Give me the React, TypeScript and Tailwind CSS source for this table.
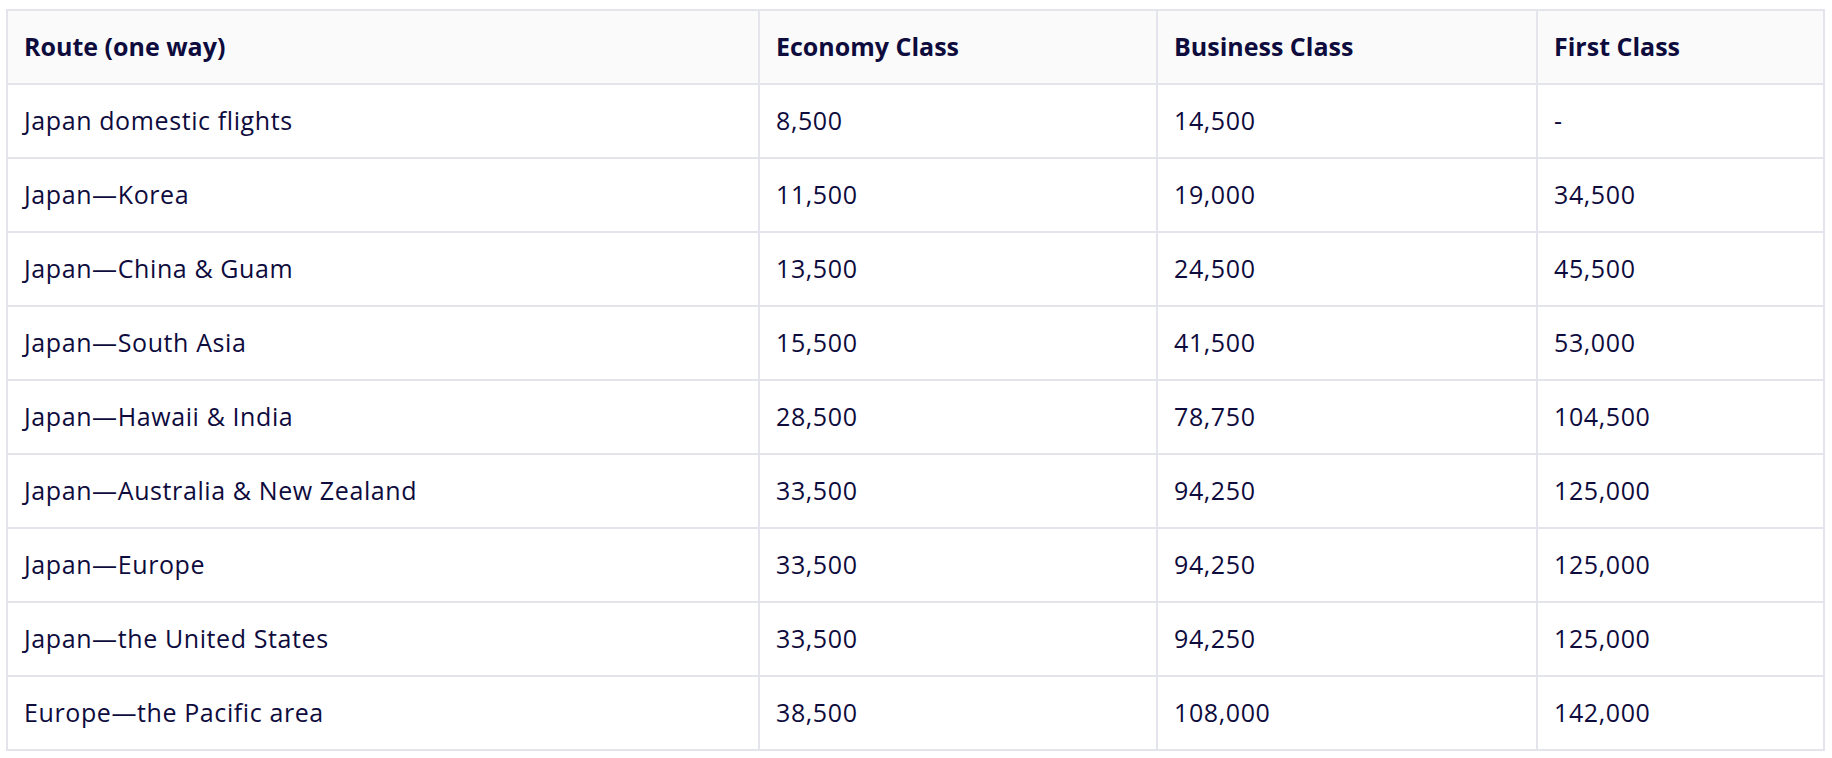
const rows: [string, string, string, string][] = [
  ['Japan domestic flights', '8,500', '14,500', '-'],
  ['Japan\u2014Korea', '11,500', '19,000', '34,500'],
  ['Japan\u2014China & Guam', '13,500', '24,500', '45,500'],
  ['Japan\u2014South Asia', '15,500', '41,500', '53,000'],
  ['Japan\u2014Hawaii & India', '28,500', '78,750', '104,500'],
  ['Japan\u2014Australia & New Zealand', '33,500', '94,250', '125,000'],
  ['Japan\u2014Europe', '33,500', '94,250', '125,000'],
  ['Japan\u2014the United States', '33,500', '94,250', '125,000'],
  ['Europe\u2014the Pacific area', '38,500', '108,000', '142,000'],
];

const headers = ['Route (one way)', 'Economy Class', 'Business Class', 'First Class'];

export default function App() {
  return (
    <div className="min-h-screen bg-white pl-[6px] pt-[9px] font-['Open_Sans',sans-serif] text-[#0e0b3d]">
      <table className="w-[1817px] table-fixed border-collapse border-2 border-[#e4e4ec]">
        <colgroup>
          <col className="w-[752px]" />
          <col className="w-[398px]" />
          <col className="w-[380px]" />
          <col className="w-[287px]" />
        </colgroup>
        <thead>
          <tr className="bg-[#fafafa]">
            {headers.map((h) => (
              <th
                key={h}
                className="h-[74px] border-2 border-[#e4e4ec] px-4 text-left align-middle text-[25px] font-bold"
              >
                {h}
              </th>
            ))}
          </tr>
        </thead>
        <tbody>
          {rows.map((r) => (
            <tr key={r[0]}>
              {r.map((c, i) => (
                <td
                  key={i}
                  className="h-[74px] border-2 border-[#e4e4ec] px-4 align-middle text-[25px] font-normal tracking-[0.6px]"
                >
                  {c}
                </td>
              ))}
            </tr>
          ))}
        </tbody>
      </table>
    </div>
  );
}
